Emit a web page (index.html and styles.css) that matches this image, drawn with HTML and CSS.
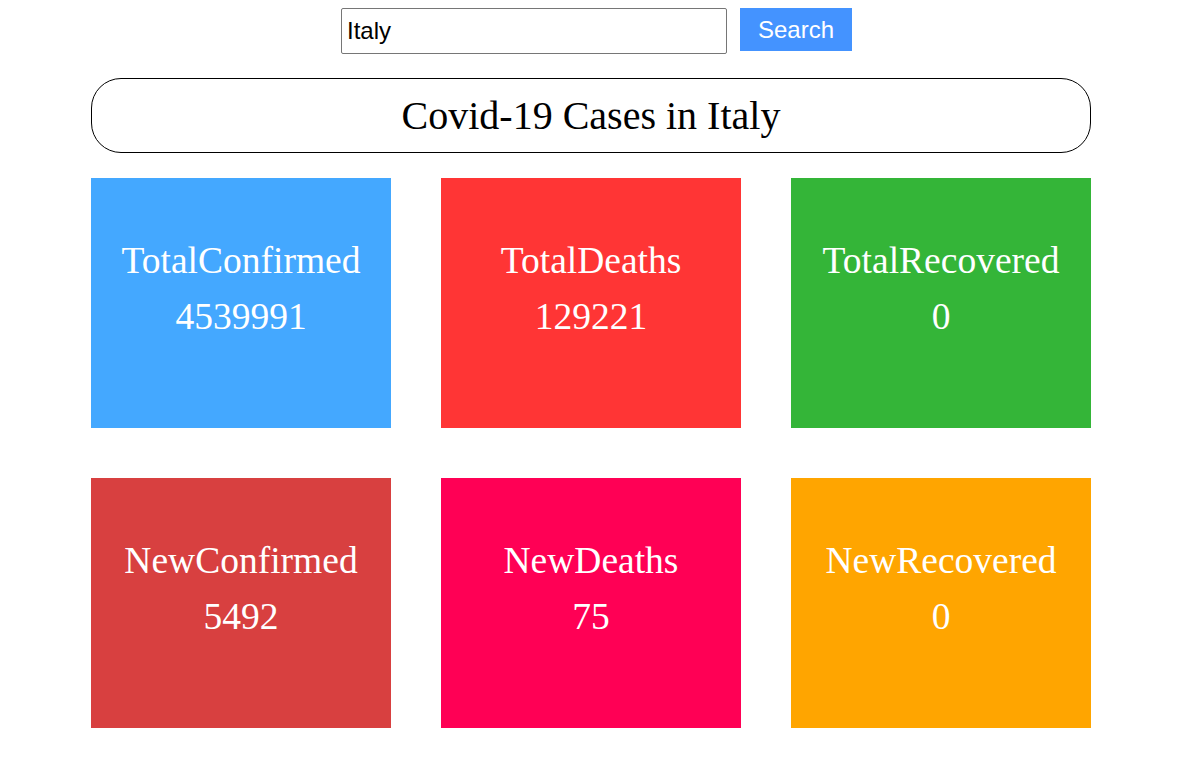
FILE: index.html
```html
<!DOCTYPE html>
<html>
<head>
<meta charset="utf-8">
<title>Covid-19 Cases</title>
<link rel="stylesheet" href="styles.css">
</head>
<body>
<form class="search">
  <input class="search-input" type="text" value="Italy">
  <button class="search-btn" type="button">Search</button>
</form>
<div class="title">Covid-19 Cases in Italy</div>
<div class="cards">
  <div class="card c-blue"><div>TotalConfirmed</div><div>4539991</div></div>
  <div class="card c-red"><div>TotalDeaths</div><div>129221</div></div>
  <div class="card c-green"><div>TotalRecovered</div><div>0</div></div>
  <div class="card c-darkred"><div>NewConfirmed</div><div>5492</div></div>
  <div class="card c-pink"><div>NewDeaths</div><div>75</div></div>
  <div class="card c-orange"><div>NewRecovered</div><div>0</div></div>
</div>
</body>
</html>
```
FILE: styles.css
```css
body {
  margin: 8px;
  font-family: "Liberation Serif", "Times New Roman", serif;
  background: #fff;
}
.search {
  display: flex;
  justify-content: center;
  gap: 13px;
  padding-left: 11px;
  margin: 0;
}
.search-input {
  box-sizing: border-box;
  width: 386px;
  height: 46px;
  font-family: "Liberation Sans", Arial, sans-serif;
  font-size: 24px;
  padding: 0 5px;
  border: 1px solid #767676;
  border-radius: 2px;
  color: #000;
}
.search-btn {
  box-sizing: border-box;
  width: 112px;
  height: 43px;
  background: #4493ff;
  color: #fff;
  border: none;
  font-family: "Liberation Sans", Arial, sans-serif;
  font-size: 24px;
  padding: 0;
}
.title {
  box-sizing: border-box;
  width: 1000px;
  height: 75px;
  margin: 24px auto 0;
  border: 1px solid #000;
  border-radius: 30px;
  text-align: center;
  font-size: 40px;
  line-height: 73px;
  color: #000;
}
.cards {
  display: grid;
  grid-template-columns: repeat(3, 300px);
  grid-auto-rows: 250px;
  gap: 50px;
  width: 1000px;
  margin: 25px auto 0;
}
.card {
  box-sizing: border-box;
  padding-top: 55px;
  color: #fff;
  font-size: 37.5px;
  line-height: 56px;
  text-align: center;
}
.c-blue { background: #44a8ff; }
.c-red { background: #ff3535; }
.c-green { background: #34b538; }
.c-darkred { background: #d84040; }
.c-pink { background: #ff0055; }
.c-orange { background: #ffa500; }
```
